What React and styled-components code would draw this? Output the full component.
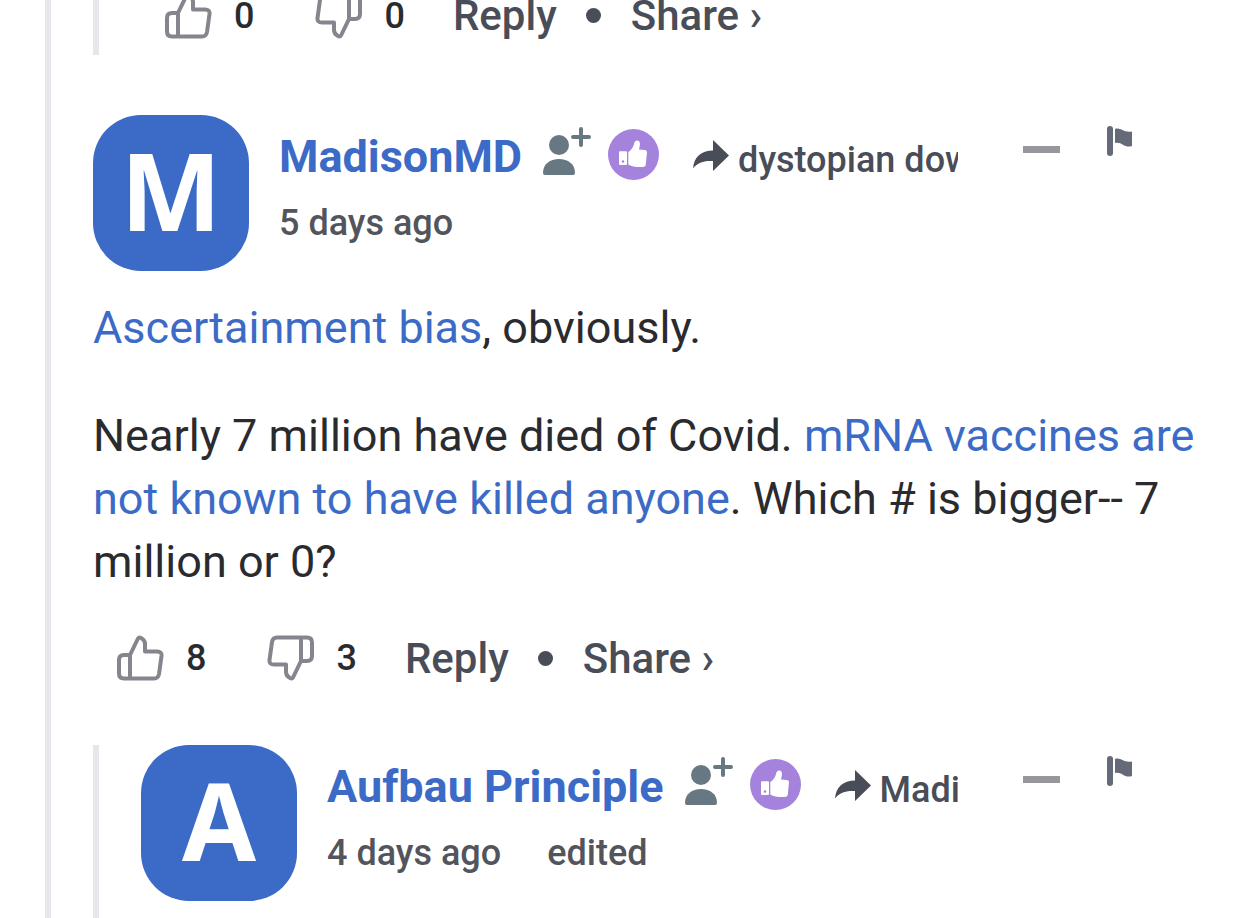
import styled, { createGlobalStyle } from "styled-components";

const GlobalStyle = createGlobalStyle`
  * {
    box-sizing: border-box;
  }
  body {
    margin: 0;
    background: #ffffff;
    font-family: Roboto, "Liberation Sans", sans-serif;
    color: #2a2b2f;
  }
`;

const Page = styled.main`
  display: flex;
  height: 100vh;
  padding: 0 42px 0 45px;
  overflow: hidden;
`;

const Thread = styled.div`
  flex: 1;
  min-width: 0;
  border-left: 6px solid #e6e6ed;
  padding-left: 42px;
`;

const Replies = styled.div`
  border-left: 6px solid #e6e6ed;
  padding-left: 42px;
  padding-bottom: ${(props) => (props.$end ? "24px" : "60px")};
  margin-bottom: ${(props) => (props.$end ? "60px" : "0")};
`;

const Header = styled.header`
  display: flex;
  align-items: flex-start;
`;

const Avatar = styled.a`
  display: flex;
  flex: none;
  align-items: center;
  justify-content: center;
  width: 156px;
  height: 156px;
  margin-right: 30px;
  padding-bottom: 6px;
  border-radius: 48px;
  background: #3b6bc6;
  color: #ffffff;
  font-family: "Noto Sans", sans-serif;
  font-size: 107px;
  font-weight: 700;
  line-height: 150px;
  text-decoration: none;
`;

const Byline = styled.div`
  flex: 1;
  min-width: 0;
  padding-top: 10px;
  overflow: hidden;
`;

const NameRow = styled.div`
  display: flex;
  align-items: center;
  height: 64px;
  white-space: nowrap;

  svg {
    flex: none;
  }
`;

const Name = styled.a`
  color: #3b6bc6;
  font-size: 45px;
  font-weight: 700;
  line-height: 64px;
  text-decoration: none;
`;

const IconButton = styled.button`
  display: flex;
  flex: none;
  align-items: center;
  padding: 0;
  border: 0;
  background: none;
  color: inherit;
  font: inherit;
  cursor: pointer;
`;

const FollowButton = styled(IconButton)`
  margin: 0 17px 12px 21px;
`;

const Badge = styled.span`
  display: flex;
  flex: none;
  margin: 0 34px 6px 0;
`;

const ParentLink = styled.a`
  display: flex;
  align-items: center;
  gap: 9px;
  color: #494d57;
  font-size: 36px;
  font-weight: 500;
  line-height: 64px;
  padding-top: 6px;
  text-decoration: none;

  svg {
    margin-bottom: 10px;
  }
`;

const Meta = styled.div`
  display: flex;
  gap: 46px;
  color: #53555c;
  font-size: 36px;
  font-weight: 500;
  line-height: 68px;
`;

const Tools = styled.div`
  display: flex;
  flex: none;
  align-items: flex-start;
  gap: 47px;
  padding: 11px 68px 0 65px;
`;

const CollapseButton = styled(IconButton)`
  height: 46px;
`;

const Dash = styled.span`
  width: 37px;
  height: 7px;
  background: #96979c;
`;

const Message = styled.div`
  padding-top: 25px;
  font-size: 45px;
  line-height: 63px;

  p {
    margin: 0 0 45px;
  }
  p:last-child {
    margin-bottom: 42px;
  }
  a {
    color: #3b6bc6;
    text-decoration: none;
  }
`;

const Footer = styled.footer`
  display: flex;
  align-items: center;
  height: ${(props) => (props.$cut ? "31px" : "46px")};
  margin-bottom: ${(props) => (props.$cut ? "0" : "64px")};
  padding-left: 24px;
  color: #494d57;
  font-size: 42px;
  font-weight: 500;
`;

const Vote = styled(IconButton)`
  gap: 22px;
  margin-right: ${(props) => props.$space}px;
  color: #2a2b2f;
  font-size: 36px;
  font-weight: 500;
  line-height: 46px;
`;

const Dot = styled.span`
  width: 15px;
  height: 15px;
  margin: 0 30px 0 29px;
  border-radius: 50%;
  background: #494d57;
`;

const ThumbIcon = ({ down }) => (
  <svg width="47" height="46" viewBox="0 0 47 46" fill="none" stroke="#85868d" strokeWidth="4" strokeLinejoin="round">
    <g transform={down ? "rotate(180 23.5 23)" : undefined}>
      <path d="M13 20 L21 3.500 Q22 2 24 3 Q28 5 28 9 V16.500 H40 Q45 16.500 44.500 21 L42 39 Q41.200 43.500 37 43.500 H7 Q2 43.500 2 38.500 V25 Q2 20 7 20 Z" />
      <path d="M13 20 V43" />
    </g>
  </svg>
);

const FollowIcon = () => (
  <svg width="48" height="48" viewBox="0 0 48 48" fill="#687882">
    <circle cx="16" cy="18" r="10" />
    <path d="M0 46 C0 37 7 32 16 32 C25 32 32 37 32 46 Q32 48 30 48 H2 Q0 48 0 46 Z" />
    <path d="M38 2 V18 M30 10 H46" stroke="#687882" strokeWidth="4" strokeLinecap="round" />
  </svg>
);

const UpvoterIcon = () => (
  <svg width="51" height="51" viewBox="0 0 51 51">
    <circle cx="25.500" cy="25.500" r="25.500" fill="#a582dc" />
    <path
      fill="#ffffff"
      d="M20.300 23 C23 21.500 25.500 18 26 15 C26.400 12.500 28 11.400 29.500 11.600 C32 12 32.800 14.500 31 20.500 L37 21 Q39 21.300 39 23 L37.800 35.500 Q37.500 38 34.500 38 C28 38.200 24 37.500 20.300 35.500 Z"
    />
    <path fill="#ffffff" d="M12 22.300 H18 Q19 22.300 19 23.300 V35 Q19 36 18 36 H12 Q11 36 11 35 V23.300 Q11 22.300 12 22.300 Z" />
    <circle cx="15" cy="32.500" r="1.200" fill="#a582dc" />
  </svg>
);

const ArrowIcon = () => (
  <svg width="36" height="31" viewBox="0 0 36 31" fill="#494d57">
    <path d="M20 0 L36 15.500 L20 31 V21 C11 20.500 5 22 0 28.500 C1 17 8 10.500 20 10.500 Z" />
  </svg>
);

const FlagIcon = () => (
  <svg width="25" height="30" viewBox="0 0 25 30" fill="#646a78">
    <rect width="6" height="30" rx="3" />
    <path d="M8 3 C14 1 16 7 25 5.500 V20 C17 22.500 15 15 8 17 Z" />
  </svg>
);

const CommentHeader = ({ name, parent, time, edited }) => (
  <Header>
    <Avatar href="#profile" aria-label={name}>
      {name[0]}
    </Avatar>
    <Byline>
      <NameRow>
        <Name href="#profile">{name}</Name>
        <FollowButton type="button" aria-label={`Follow ${name}`}>
          <FollowIcon />
        </FollowButton>
        <Badge>
          <UpvoterIcon />
        </Badge>
        <ParentLink href="#parent">
          <ArrowIcon />
          {parent}
        </ParentLink>
      </NameRow>
      <Meta>
        <span>{time}</span>
        {edited && <span>edited</span>}
      </Meta>
    </Byline>
    <Tools>
      <CollapseButton type="button" aria-label="Collapse">
        <Dash />
      </CollapseButton>
      <IconButton type="button" aria-label="Flag as inappropriate">
        <FlagIcon />
      </IconButton>
    </Tools>
  </Header>
);

const CommentFooter = ({ likes, dislikes, cut }) => (
  <Footer $cut={cut}>
    <Vote type="button" aria-label="Upvote" $space={61}>
      <ThumbIcon />
      {likes}
    </Vote>
    <Vote type="button" aria-label="Downvote" $space={48}>
      <ThumbIcon down />
      {dislikes}
    </Vote>
    <IconButton type="button">Reply</IconButton>
    <Dot />
    <IconButton type="button">Share ›</IconButton>
  </Footer>
);

const App = () => {
  return (
    <>
      <GlobalStyle />
      <Page>
        <Thread>
          <Replies $end>
            <CommentFooter likes={0} dislikes={0} cut />
          </Replies>
          <article>
            <CommentHeader name="MadisonMD" parent="dystopian down" time="5 days ago" />
            <Message>
              <p>
                <a href="#bias">Ascertainment bias</a>, obviously.
              </p>
              <p>
                Nearly 7 million have died of Covid.{" "}
                <a href="#vaccines">mRNA vaccines are not known to have killed anyone</a>. Which # is bigger-- 7
                million or 0?
              </p>
            </Message>
            <CommentFooter likes={8} dislikes={3} />
          </article>
          <Replies>
            <CommentHeader name="Aufbau Principle" parent="MadisonMD" time="4 days ago" edited />
          </Replies>
        </Thread>
      </Page>
    </>
  );
};

export default App;
